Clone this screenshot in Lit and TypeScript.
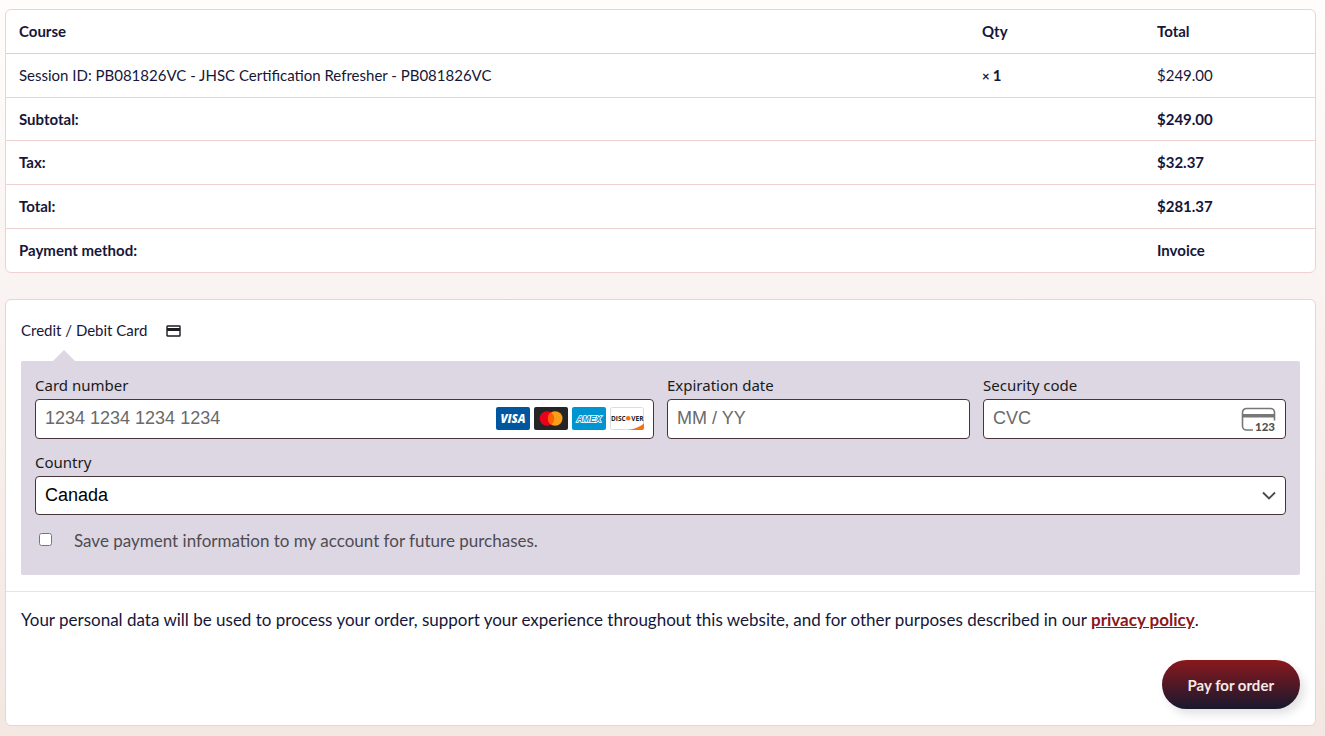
import { LitElement, html, css, svg } from "lit";
import { customElement } from "lit/decorators.js";

const totals = [
  ["Subtotal:", "$249.00"],
  ["Tax:", "$32.37"],
  ["Total:", "$281.37"],
  ["Payment method:", "Invoice"],
];

const brands = [
  {
    name: "Visa",
    art: svg`<rect width="34" height="23" rx="2" fill="#00579f"/>
      <text x="17" y="15.500" text-anchor="middle" font-family="Open Sans, sans-serif" font-size="11.500" font-weight="800" font-style="italic" fill="#fff">VISA</text>`,
  },
  {
    name: "Mastercard",
    art: svg`<rect width="34" height="23" rx="2" fill="#252525"/>
      <circle cx="13" cy="11.5" r="7.3" fill="#eb001b"/>
      <circle cx="21.2" cy="11.5" r="7.3" fill="#f79e1b"/>
      <path d="M17.1 5.5a7.3 7.3 0 0 1 0 12a7.3 7.3 0 0 1 0-12z" fill="#ff5f00"/>`,
  },
  {
    name: "American Express",
    art: svg`<rect width="34" height="23" rx="2" fill="#0095d1"/>
      <text x="17" y="14.500" text-anchor="middle" font-family="Liberation Sans, sans-serif" font-size="8.5" font-weight="700" font-style="italic" fill="#0095d1" stroke="#fff" stroke-width="1.6" paint-order="stroke">AMEX</text>`,
  },
  {
    name: "Discover",
    art: svg`<rect x=".5" y=".5" width="33" height="22" rx="2" fill="#fff" stroke="#dcdcdc"/>
      <path d="M34 16.5V21a2 2 0 0 1-2 2H18.500C25 21.700 30 19.700 34 16.500z" fill="#f47216"/>
      <text x="1" y="13.500" font-family="Open Sans, sans-serif" font-size="6.500" font-weight="700" fill="#222">DISC</text>
      <circle cx="18.200" cy="11.200" r="2.300" fill="#f47216"/>
      <text x="33.500" y="13.500" text-anchor="end" font-family="Open Sans, sans-serif" font-size="6.500" font-weight="700" fill="#222">VER</text>`,
  },
];

@customElement("app-root")
export class AppRoot extends LitElement {
  static styles = css`
    :host {
      display: block;
      box-sizing: border-box;
      min-height: 100vh;
      padding: 9px 9px 10px 5px;
      font-family: Lato, "Open Sans", sans-serif;
      font-size: 15px;
      line-height: 23px;
      color: #16163a;
      background: linear-gradient(#fffdfc, #f9f3f1 40%, #f3e7e1);
    }
    * {
      box-sizing: border-box;
    }
    .order {
      width: 100%;
      table-layout: fixed;
      border: 1px solid #eed1d1;
      border-radius: 6px;
      border-spacing: 0;
      background: #fff;
      margin-bottom: 26px;
    }
    .order th,
    .order td {
      height: 44px;
      padding: 0 13px;
      text-align: left;
      border-bottom: 1px solid #eed1d1;
    }
    .order thead th {
      border-bottom-color: #d3d3d6;
    }
    .order tfoot tr:first-child > *,
    .order tfoot tr:last-child > * {
      height: 43px;
    }
    .order tfoot tr:last-child > * {
      border-bottom: 0;
    }
    .order tfoot td {
      font-weight: 700;
    }
    .order .qty {
      width: 175px;
    }
    .order .total {
      width: 171px;
    }
    .times {
      font-size: 13px;
    }
    .payment {
      border: 1px solid #eed1d1;
      border-radius: 6px;
      background: #fff;
    }
    .methods {
      padding: 19px 15px 16px;
    }
    .method {
      display: flex;
      align-items: center;
      gap: 19px;
    }
    .box {
      position: relative;
      margin-top: 19px;
      padding: 14px 14px 21px;
      border-radius: 2px;
      background: #dcd7e3;
      color: #1a1a1a;
    }
    .box::before {
      content: "";
      position: absolute;
      left: 32px;
      top: -11px;
      border: 11px solid transparent;
      border-top: 0;
      border-bottom-color: #dcd7e3;
    }
    .fields {
      display: grid;
      grid-template-columns: repeat(4, 1fr);
      gap: 13px;
    }
    .wide {
      grid-column: span 2;
    }
    .full {
      grid-column: 1 / -1;
    }
    .field label {
      display: block;
      height: 24px;
      line-height: 20px;
      font-family: "Noto Sans", sans-serif;
      font-size: 15px;
    }
    .control {
      display: flex;
      align-items: center;
      height: 40px;
      padding-right: 9px;
      border: 1px solid #4b3439;
      border-radius: 4px;
      background: #fff;
    }
    .full .control {
      height: 39px;
    }
    .control input,
    .control select {
      flex: 1;
      min-width: 0;
      height: 100%;
      padding: 0 9px 2px;
      border: 0;
      outline: 0;
      appearance: none;
      background: transparent;
      color: #000;
      font: 18px "Liberation Sans", Arial, sans-serif;
    }
    .control input::placeholder {
      color: #6a6a6a;
      opacity: 1;
    }
    .brands {
      display: flex;
      gap: 4px;
      padding-bottom: 2px;
    }
    svg {
      display: block;
      flex: none;
    }
    .save {
      display: flex;
      align-items: center;
      gap: 22px;
      margin-top: 13px;
      padding-left: 4px;
      font-size: 17px;
      line-height: 26px;
      color: #4f4b52;
    }
    .save input {
      width: 13px;
      height: 13px;
      margin: 0 0 4px;
    }
    .footer {
      padding: 15px 15px 16px;
      border-top: 1px solid #e6e4ea;
    }
    .privacy {
      margin: 0 0 27px;
      font-size: 17px;
      line-height: 26px;
    }
    .privacy a {
      color: #8a181d;
      font-weight: 700;
    }
    .pay {
      display: block;
      height: 49px;
      margin-left: auto;
      padding: 0 26px;
      border: 0;
      border-radius: 25px;
      background: linear-gradient(#8a181d, #18182f);
      box-shadow: 4px 5px 10px rgba(0, 0, 0, 0.12);
      color: #f5e9e6;
      font: 700 15px Lato, sans-serif;
    }
  `;

  render() {
    return html`
      <table class="order">
        <thead>
          <tr><th>Course</th><th class="qty">Qty</th><th class="total">Total</th></tr>
        </thead>
        <tbody>
          <tr>
            <td>Session ID: PB081826VC - JHSC Certification Refresher - PB081826VC</td>
            <td><strong><span class="times">×&nbsp;</span>1</strong></td>
            <td>$249.00</td>
          </tr>
        </tbody>
        <tfoot>
          ${totals.map(([k, v]) => html`<tr><th colspan="2" scope="row">${k}</th><td>${v}</td></tr>`)}
        </tfoot>
      </table>

      <form class="payment">
        <div class="methods">
          <div class="method">
            <span>Credit / Debit Card</span>
            <svg width="15" height="12" viewBox="0 0 15 12">
              <rect x="1" y="1" width="13" height="10" rx=".6" fill="none" stroke="#1c1c22" stroke-width="1.400"/>
              <path d="M1 3h13v3H1z" fill="#1c1c22"/>
            </svg>
          </div>
          <div class="box">
            <div class="fields">
              <div class="field wide">
                <label for="number">Card number</label>
                <div class="control">
                  <input id="number" placeholder="1234 1234 1234 1234" />
                  <div class="brands">
                    ${brands.map(
                      (b) => html`<svg width="34" height="23" viewBox="0 0 34 23" role="img" aria-label=${b.name}>${b.art}</svg>`
                    )}
                  </div>
                </div>
              </div>
              <div class="field">
                <label for="expiry">Expiration date</label>
                <div class="control"><input id="expiry" placeholder="MM / YY" /></div>
              </div>
              <div class="field">
                <label for="cvc">Security code</label>
                <div class="control">
                  <input id="cvc" placeholder="CVC" />
                  <svg width="35" height="26" viewBox="0 0 35 26">
                    <path d="M12 24H5.500a4 4 0 0 1-4-4V6.500a4 4 0 0 1 4-4h24a4 4 0 0 1 4 4v8" fill="none" stroke="#777" stroke-width="1.600"/>
                    <path d="M1.500 8h32v3.500h-32z" fill="#777"/>
                    <text x="34" y="24.500" text-anchor="end" font-family="Lato, sans-serif" font-size="11.500" font-weight="900" fill="#505050">123</text>
                  </svg>
                </div>
              </div>
              <div class="field full">
                <label for="country">Country</label>
                <div class="control">
                  <select id="country"><option>Canada</option></select>
                  <svg width="14" height="9" viewBox="0 0 14 9">
                    <path d="M1 1.500l6 6 6-6" fill="none" stroke="#4a4a4a" stroke-width="1.900"/>
                  </svg>
                </div>
              </div>
            </div>
            <label class="save">
              <input type="checkbox" />
              <span>Save payment information to my account for future purchases.</span>
            </label>
          </div>
        </div>
        <div class="footer">
          <p class="privacy">
            Your personal data will be used to process your order, support your experience throughout this
            website, and for other purposes described in our <a href="#privacy">privacy policy</a>.
          </p>
          <button class="pay" type="button">Pay for order</button>
        </div>
      </form>
    `;
  }
}
